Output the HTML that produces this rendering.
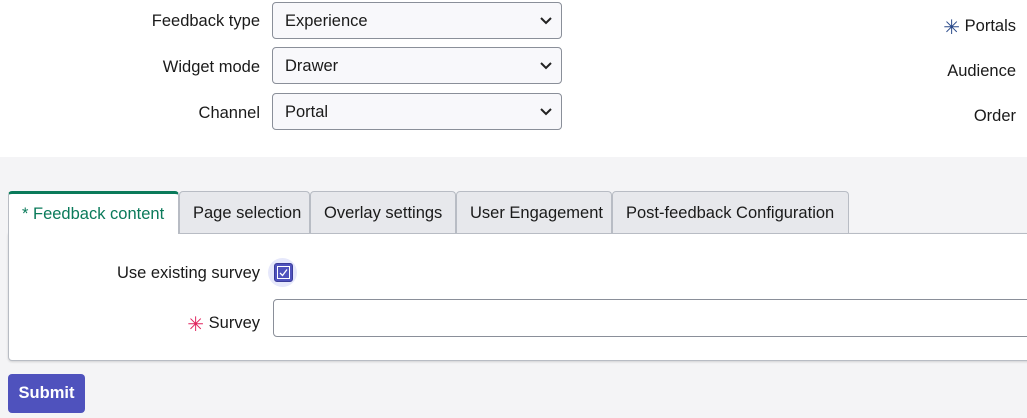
<!DOCTYPE html>
<html><head><style>
body{margin:0;width:1027px;height:418px;overflow:hidden;font-family:"Liberation Sans",sans-serif;font-size:16.5px;color:#1a1a1a;background:#f4f4f6;position:relative}
.top{position:absolute;left:0;top:0;width:1027px;height:157px;background:#fff}
.lbl{position:absolute;text-align:right;width:250px;left:10px}
.sel{position:absolute;left:272px;width:290px;height:36px;border:1px solid #8a8f99;border-radius:4px;background:#f8f8fb;box-sizing:border-box;padding:9px 12px}
.sel svg{position:absolute;right:9px;top:14px}
.r{position:absolute;right:11px}
.tab{position:absolute;top:191px;height:42px;box-sizing:border-box;border:1px solid #b8bcc4;border-bottom:none;border-radius:4px 4px 0 0;background:#e7e8ec;padding:12px 13px 0;white-space:nowrap}
.panel{position:absolute;left:8px;top:233px;width:1030px;height:128px;background:#fff;border:1px solid #b8bcc4;border-radius:0 0 4px 4px;box-sizing:border-box;box-shadow:0 1px 2px rgba(0,0,0,.15)}
</style></head><body>
<div class="top"></div>
<div class="lbl" style="top:12px">Feedback type</div>
<div class="sel" style="top:2px;height:37px">Experience<svg width="12" height="8"><path d="M1 1l5 5 5-5" stroke="#222" stroke-width="2" fill="none"/></svg></div>
<div class="lbl" style="top:58px">Widget mode</div>
<div class="sel" style="top:47px;height:37px">Drawer<svg width="12" height="8"><path d="M1 1l5 5 5-5" stroke="#222" stroke-width="2" fill="none"/></svg></div>
<div class="lbl" style="top:104px">Channel</div>
<div class="sel" style="top:93px;height:37px">Portal<svg width="12" height="8"><path d="M1 1l5 5 5-5" stroke="#222" stroke-width="2" fill="none"/></svg></div>
<div class="r" style="top:15px"><span style="color:#2a4a8a;font-size:20px;vertical-align:-3px">✳</span> Portals</div>
<div class="r" style="top:62px">Audience</div>
<div class="r" style="top:107px">Order</div>

<div class="panel"></div>
<div class="tab" style="left:8px;width:171px;background:#fff;border-top:3px solid #0a7a5a;height:43px;padding-top:11px;color:#0a7a5a;z-index:2">* Feedback content</div>
<div class="tab" style="left:179px;width:131px">Page selection</div>
<div class="tab" style="left:310px;width:146px">Overlay settings</div>
<div class="tab" style="left:456px;width:156px">User Engagement</div>
<div class="tab" style="left:612px;width:237px">Post-feedback Configuration</div>

<div class="lbl" style="top:264px">Use existing survey</div>
<div style="position:absolute;left:268px;top:258px;width:29px;height:29px;border-radius:50%;background:#e6e8fb"></div>
<div style="position:absolute;left:274px;top:263px;width:19px;height:19px;border-radius:3px;background:#4f52bd;box-sizing:border-box;border:1px solid #3a3c99"><svg width="17" height="17" style="position:absolute;left:0;top:0"><rect x="2.5" y="2.5" width="12" height="12" fill="none" stroke="#fff" stroke-width="1"/><path d="M5 9l2.5 2.5 4.5-6" stroke="#fff" stroke-width="1.3" fill="none"/></svg></div>
<div class="lbl" style="top:312px"><span style="color:#e0245e;font-size:20px;vertical-align:-3px">✳</span> Survey</div>
<div style="position:absolute;left:273px;top:299px;width:770px;height:38px;border:1px solid #8a8f99;border-radius:4px;box-sizing:border-box;background:#fff"></div>

<div style="position:absolute;left:8px;top:374px;width:77px;height:39px;background:#4f52bd;border-radius:4px;color:#fff;font-weight:bold;text-align:center;line-height:39px">Submit</div>
</body></html>
